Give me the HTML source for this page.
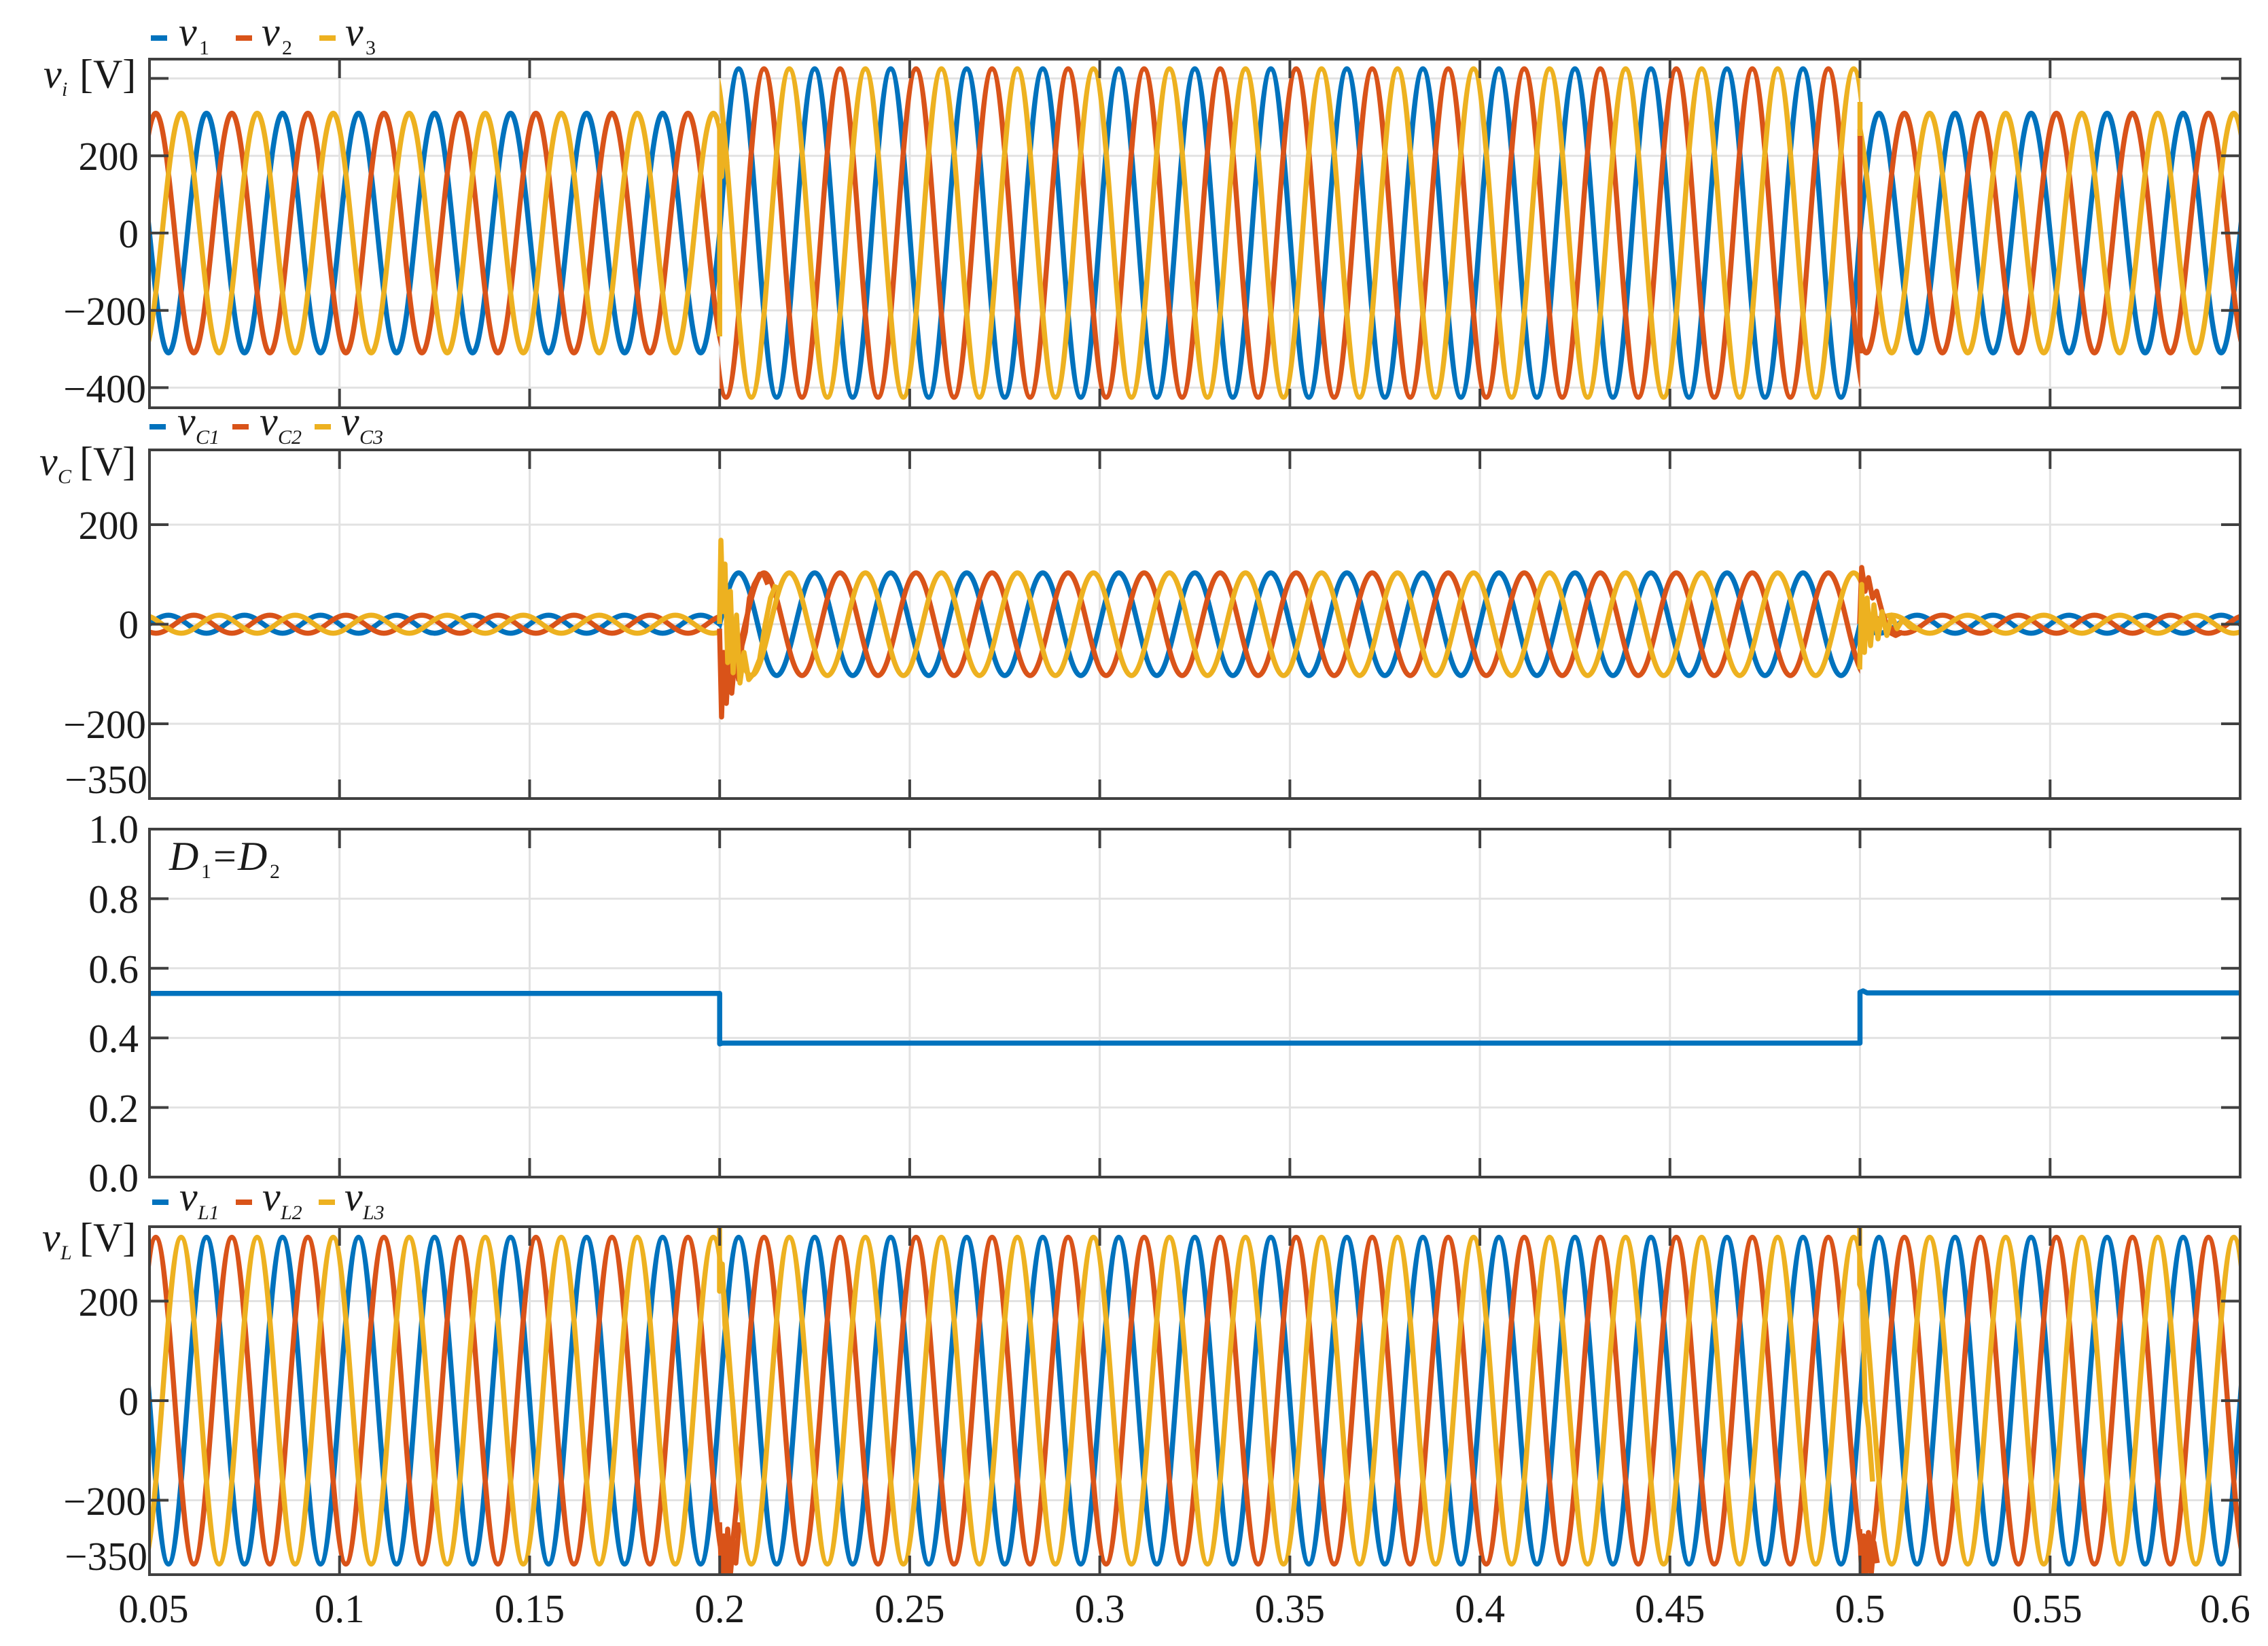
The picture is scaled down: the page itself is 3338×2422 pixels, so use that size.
<!DOCTYPE html>
<html><head><meta charset="utf-8"><style>
html,body{margin:0;padding:0;background:#fff;}
svg{display:block;}
text{font-family:"Liberation Serif",serif;fill:#1a1a1a;}
.t{font-size:59px;}
.it{font-style:italic;}
</style></head><body>
<svg width="3338" height="2422" viewBox="0 0 3338 2422" xmlns="http://www.w3.org/2000/svg" xmlns:xlink="http://www.w3.org/1999/xlink">
<defs>
<path id="w" vector-effect="non-scaling-stroke" d="M0,0c9.123,-51.23 17.849,-100 27.973,-100s18.85,48.77 27.973,100s17.849,100 27.973,100s18.85,-48.77 27.973,-100s17.849,-100 27.973,-100s18.85,48.77 27.973,100s17.849,100 27.973,100s18.85,-48.77 27.973,-100s17.849,-100 27.973,-100s18.85,48.77 27.973,100s17.849,100 27.973,100s18.85,-48.77 27.973,-100s17.849,-100 27.973,-100s18.85,48.77 27.973,100s17.849,100 27.973,100s18.85,-48.77 27.973,-100s17.849,-100 27.973,-100s18.85,48.77 27.973,100s17.849,100 27.973,100s18.85,-48.77 27.973,-100s17.849,-100 27.973,-100s18.85,48.77 27.973,100s17.849,100 27.973,100s18.85,-48.77 27.973,-100s17.849,-100 27.973,-100s18.85,48.77 27.973,100s17.849,100 27.973,100s18.85,-48.77 27.973,-100s17.849,-100 27.973,-100s18.85,48.77 27.973,100s17.849,100 27.973,100s18.85,-48.77 27.973,-100s17.849,-100 27.973,-100s18.85,48.77 27.973,100s17.849,100 27.973,100s18.85,-48.77 27.973,-100s17.849,-100 27.973,-100s18.85,48.77 27.973,100s17.849,100 27.973,100s18.85,-48.77 27.973,-100s17.849,-100 27.973,-100s18.85,48.77 27.973,100s17.849,100 27.973,100s18.85,-48.77 27.973,-100s17.849,-100 27.973,-100s18.85,48.77 27.973,100s17.849,100 27.973,100s18.85,-48.77 27.973,-100s17.849,-100 27.973,-100s18.85,48.77 27.973,100s17.849,100 27.973,100s18.85,-48.77 27.973,-100s17.849,-100 27.973,-100s18.85,48.77 27.973,100s17.849,100 27.973,100s18.85,-48.77 27.973,-100s17.849,-100 27.973,-100s18.85,48.77 27.973,100s17.849,100 27.973,100s18.85,-48.77 27.973,-100s17.849,-100 27.973,-100s18.85,48.77 27.973,100s17.849,100 27.973,100s18.85,-48.77 27.973,-100s17.849,-100 27.973,-100s18.85,48.77 27.973,100s17.849,100 27.973,100s18.85,-48.77 27.973,-100s17.849,-100 27.973,-100s18.85,48.77 27.973,100s17.849,100 27.973,100s18.85,-48.77 27.973,-100s17.849,-100 27.973,-100s18.85,48.77 27.973,100s17.849,100 27.973,100s18.85,-48.77 27.973,-100s17.849,-100 27.973,-100s18.85,48.77 27.973,100s17.849,100 27.973,100s18.85,-48.77 27.973,-100s17.849,-100 27.973,-100s18.85,48.77 27.973,100s17.849,100 27.973,100s18.85,-48.77 27.973,-100s17.849,-100 27.973,-100s18.85,48.77 27.973,100s17.849,100 27.973,100s18.85,-48.77 27.973,-100s17.849,-100 27.973,-100s18.85,48.77 27.973,100s17.849,100 27.973,100s18.85,-48.77 27.973,-100s17.849,-100 27.973,-100s18.85,48.77 27.973,100s17.849,100 27.973,100s18.85,-48.77 27.973,-100s17.849,-100 27.973,-100s18.85,48.77 27.973,100s17.849,100 27.973,100s18.85,-48.77 27.973,-100s17.849,-100 27.973,-100s18.85,48.77 27.973,100s17.849,100 27.973,100s18.85,-48.77 27.973,-100s17.849,-100 27.973,-100s18.85,48.77 27.973,100s17.849,100 27.973,100s18.85,-48.77 27.973,-100s17.849,-100 27.973,-100s18.85,48.77 27.973,100s17.849,100 27.973,100s18.85,-48.77 27.973,-100s17.849,-100 27.973,-100s18.85,48.77 27.973,100s17.849,100 27.973,100s18.85,-48.77 27.973,-100s17.849,-100 27.973,-100s18.85,48.77 27.973,100s17.849,100 27.973,100s18.85,-48.77 27.973,-100s17.849,-100 27.973,-100s18.85,48.77 27.973,100s17.849,100 27.973,100s18.85,-48.77 27.973,-100s17.849,-100 27.973,-100s18.85,48.77 27.973,100s17.849,100 27.973,100s18.85,-48.77 27.973,-100s17.849,-100 27.973,-100s18.85,48.77 27.973,100s17.849,100 27.973,100s18.85,-48.77 27.973,-100s17.849,-100 27.973,-100s18.85,48.77 27.973,100s17.849,100 27.973,100s18.85,-48.77 27.973,-100"/>
<clipPath id="a1"><rect x="220" y="87" width="839.2" height="513"/><rect x="2737.5" y="87" width="559.5" height="513"/></clipPath>
<clipPath id="b1"><rect x="1059.2" y="87" width="1678.3" height="513"/></clipPath>
<clipPath id="a2"><rect x="220" y="662" width="839.2" height="513"/><rect x="2737.5" y="662" width="559.5" height="513"/></clipPath>
<clipPath id="b2"><rect x="1059.2" y="662" width="1678.3" height="513"/></clipPath>
<clipPath id="c2"><rect x="220" y="662" width="3077" height="513"/></clipPath>
<clipPath id="c4"><rect x="220" y="1805" width="3077" height="512"/></clipPath>
</defs>

<path stroke="#e2e2e2" stroke-width="3" fill="none" d="
M499.7 87V600M779.5 87V600M1059.2 87V600M1338.9 87V600M1618.6 87V600M1898.4 87V600M2178.1 87V600M2457.8 87V600M2737.5 87V600M3017.3 87V600
M499.7 662V1175M779.5 662V1175M1059.2 662V1175M1338.9 662V1175M1618.6 662V1175M1898.4 662V1175M2178.1 662V1175M2457.8 662V1175M2737.5 662V1175M3017.3 662V1175
M499.7 1220V1732M779.5 1220V1732M1059.2 1220V1732M1338.9 1220V1732M1618.6 1220V1732M1898.4 1220V1732M2178.1 1220V1732M2457.8 1220V1732M2737.5 1220V1732M3017.3 1220V1732
M499.7 1805V2317M779.5 1805V2317M1059.2 1805V2317M1338.9 1805V2317M1618.6 1805V2317M1898.4 1805V2317M2178.1 1805V2317M2457.8 1805V2317M2737.5 1805V2317M3017.3 1805V2317
M220 115.4H3297M220 229.2H3297M220 342.9H3297M220 456.7H3297M220 570.4H3297
M220 772H3297M220 918.5H3297M220 1065H3297
M220 1322.4H3297M220 1424.8H3297M220 1527.2H3297M220 1629.6H3297
M220 1914.5H3297M220 2061H3297M220 2207.5H3297"/>

<g fill="none" stroke-width="7.5" stroke-linejoin="round">
<g clip-path="url(#a1)">
<use xlink:href="#w" href="#w" stroke="#0072BD" transform="translate(52.16,342.9) scale(1,1.763)"/>
<use xlink:href="#w" href="#w" stroke="#D95319" transform="translate(89.46,342.9) scale(1,1.763)"/>
<use xlink:href="#w" href="#w" stroke="#EDB120" transform="translate(14.86,342.9) scale(1,1.763)"/>
</g>
<g clip-path="url(#b1)">
<use xlink:href="#w" href="#w" stroke="#0072BD" transform="translate(52.16,342.9) scale(1,2.417)"/>
<use xlink:href="#w" href="#w" stroke="#D95319" transform="translate(89.46,342.9) scale(1,2.417)"/>
<use xlink:href="#w" href="#w" stroke="#EDB120" transform="translate(14.86,342.9) scale(1,2.417)"/>
</g>
<path stroke="#D95319" d="M1059.2 190V433M2737.5 190V520"/>
<path stroke="#EDB120" d="M1059.2 495V185L1062 260L1066 200L1070 240M2737.5 150V200"/>

<g clip-path="url(#a2)">
<use xlink:href="#w" href="#w" stroke="#0072BD" transform="translate(52.16,918.5) scale(1,-0.132)"/>
<use xlink:href="#w" href="#w" stroke="#D95319" transform="translate(89.46,918.5) scale(1,-0.132)"/>
<use xlink:href="#w" href="#w" stroke="#EDB120" transform="translate(14.86,918.5) scale(1,-0.132)"/>
</g>
<g clip-path="url(#b2)">
<use xlink:href="#w" href="#w" stroke="#0072BD" transform="translate(52.16,918.5) scale(1,0.755)"/>
<use xlink:href="#w" href="#w" stroke="#D95319" transform="translate(89.46,918.5) scale(1,0.755)"/>
<use xlink:href="#w" href="#w" stroke="#EDB120" transform="translate(14.86,918.5) scale(1,0.755)"/>
</g>
<g clip-path="url(#c2)">
<path stroke="#D95319" d="M1059 925L1062 1055L1065 960L1069 1035L1073 960L1077 1020L1082 965L1087 1000L1092 950L1097 930L1103 880L1110 860L1118 845L1124 845L1130 860M2737 918L2740 835L2745 870L2750 850L2756 880L2762 870L2770 900L2780 930L2790 935L2800 930"/>
<path stroke="#EDB120" d="M1059 918L1061 795L1064 900L1067 830L1071 975L1075 870L1079 990L1084 905L1089 1005L1095 960L1102 1000L1110 990L1118 970L1126 920L1134 880L1142 860M2737 985L2740 860L2744 960L2748 880L2753 950L2758 890L2764 940L2770 900L2777 935L2784 905L2792 925L2800 912L2810 922L2820 925"/>
</g>

<path stroke="#0072BD" d="M220 1461.7H1059.2V1536L1063 1534.9H2737.5V1460L2742 1458L2748 1461H3297"/>

<g clip-path="url(#c4)">
<use xlink:href="#w" href="#w" stroke="#0072BD" transform="translate(52.16,2061) scale(1,2.404)"/>
<use xlink:href="#w" href="#w" stroke="#D95319" transform="translate(89.46,2061) scale(1,2.404)"/>
<path stroke="#D95319" d="M1059 2240L1062 2317L1065 2260L1068 2317L1071 2250L1075 2317L1079 2270L1083 2300L1088 2240M2737 2250L2740 2317L2743 2260L2746 2317L2750 2255L2754 2317L2758 2270L2763 2300"/>
<use xlink:href="#w" href="#w" stroke="#EDB120" transform="translate(14.86,2061) scale(1,2.404)"/>
<path stroke="#EDB120" d="M1059 1805V1900L1063 1860L1067 1950L1072 2000L1078 2060L1085 2150M2737 1805V1890L2741 1900L2745 2060L2750 2100L2756 2180"/>
</g>
</g>

<g stroke="#404040" fill="none" stroke-width="4">
<rect x="220" y="87" width="3077" height="513"/>
<rect x="220" y="662" width="3077" height="513"/>
<rect x="220" y="1220" width="3077" height="512"/>
<rect x="220" y="1805" width="3077" height="512"/>
<path d="
M499.7 87v28M779.5 87v28M1059.2 87v28M1338.9 87v28M1618.6 87v28M1898.4 87v28M2178.1 87v28M2457.8 87v28M2737.5 87v28M3017.3 87v28
M499.7 600v-28M779.5 600v-28M1059.2 600v-28M1338.9 600v-28M1618.6 600v-28M1898.4 600v-28M2178.1 600v-28M2457.8 600v-28M2737.5 600v-28M3017.3 600v-28
M499.7 662v28M779.5 662v28M1059.2 662v28M1338.9 662v28M1618.6 662v28M1898.4 662v28M2178.1 662v28M2457.8 662v28M2737.5 662v28M3017.3 662v28
M499.7 1175v-28M779.5 1175v-28M1059.2 1175v-28M1338.9 1175v-28M1618.6 1175v-28M1898.4 1175v-28M2178.1 1175v-28M2457.8 1175v-28M2737.5 1175v-28M3017.3 1175v-28
M499.7 1220v28M779.5 1220v28M1059.2 1220v28M1338.9 1220v28M1618.6 1220v28M1898.4 1220v28M2178.1 1220v28M2457.8 1220v28M2737.5 1220v28M3017.3 1220v28
M499.7 1732v-28M779.5 1732v-28M1059.2 1732v-28M1338.9 1732v-28M1618.6 1732v-28M1898.4 1732v-28M2178.1 1732v-28M2457.8 1732v-28M2737.5 1732v-28M3017.3 1732v-28
M499.7 1805v28M779.5 1805v28M1059.2 1805v28M1338.9 1805v28M1618.6 1805v28M1898.4 1805v28M2178.1 1805v28M2457.8 1805v28M2737.5 1805v28M3017.3 1805v28
M499.7 2317v-28M779.5 2317v-28M1059.2 2317v-28M1338.9 2317v-28M1618.6 2317v-28M1898.4 2317v-28M2178.1 2317v-28M2457.8 2317v-28M2737.5 2317v-28M3017.3 2317v-28
M220 115.4h28M220 229.2h28M220 342.9h28M220 456.7h28M220 570.4h28
M3297 115.4h-28M3297 229.2h-28M3297 342.9h-28M3297 456.7h-28M3297 570.4h-28
M220 772h28M220 918.5h28M220 1065h28M3297 772h-28M3297 918.5h-28M3297 1065h-28
M220 1322.4h28M220 1424.8h28M220 1527.2h28M220 1629.6h28M3297 1322.4h-28M3297 1424.8h-28M3297 1527.2h-28M3297 1629.6h-28
M220 1914.5h28M220 2061h28M220 2207.5h28M3297 1914.5h-28M3297 2061h-28M3297 2207.5h-28"/>
</g>

<rect x="222" y="52" width="24" height="8" fill="#0072BD"/><text x="263" y="67" font-size="60" class="it">v</text><text x="293" y="80" font-size="30">1</text>
<rect x="347" y="52" width="24" height="8" fill="#D95319"/><text x="385" y="67" font-size="60" class="it">v</text><text x="415" y="80" font-size="30">2</text>
<rect x="470" y="52" width="24" height="8" fill="#EDB120"/><text x="508" y="67" font-size="60" class="it">v</text><text x="538" y="80" font-size="30">3</text>

<rect x="220" y="624" width="24" height="8" fill="#0072BD"/><text x="261" y="640" font-size="60" class="it">v</text><text x="288" y="653" font-size="30" class="it">C1</text>
<rect x="342" y="624" width="24" height="8" fill="#D95319"/><text x="382" y="640" font-size="60" class="it">v</text><text x="409" y="653" font-size="30" class="it">C2</text>
<rect x="463" y="624" width="24" height="8" fill="#EDB120"/><text x="502" y="640" font-size="60" class="it">v</text><text x="529" y="653" font-size="30" class="it">C3</text>

<rect x="224" y="1765" width="24" height="8" fill="#0072BD"/><text x="264" y="1781" font-size="60" class="it">v</text><text x="291" y="1794" font-size="30" class="it">L1</text>
<rect x="347" y="1765" width="24" height="8" fill="#D95319"/><text x="386" y="1781" font-size="60" class="it">v</text><text x="413" y="1794" font-size="30" class="it">L2</text>
<rect x="469" y="1765" width="24" height="8" fill="#EDB120"/><text x="507" y="1781" font-size="60" class="it">v</text><text x="534" y="1794" font-size="30" class="it">L3</text>

<text x="64" y="129" font-size="60" class="it">v</text><text x="91" y="141" font-size="30" class="it">i</text><text x="117" y="129" font-size="60">[V]</text>
<text x="58" y="699" font-size="60" class="it">v</text><text x="85" y="711" font-size="30" class="it">C</text><text x="117" y="699" font-size="60">[V]</text>
<text x="62" y="1841" font-size="60" class="it">v</text><text x="89" y="1853" font-size="30" class="it">L</text><text x="117" y="1841" font-size="60">[V]</text>

<text x="249" y="1280" font-size="60" class="it">D</text><text x="296" y="1292" font-size="30">1</text><text x="314" y="1280" font-size="60">=</text><text x="350" y="1280" font-size="60" class="it">D</text><text x="397" y="1292" font-size="30">2</text>

<g class="t" text-anchor="end">
<text x="204" y="250">200</text>
<text x="204" y="364">0</text>
<text x="215" y="478">−200</text>
<text x="215" y="592">−400</text>
<text x="204" y="793">200</text>
<text x="204" y="939">0</text>
<text x="215" y="1086">−200</text>
<text x="217" y="1167">−350</text>
<text x="204" y="1240">1.0</text>
<text x="204" y="1343">0.8</text>
<text x="204" y="1446">0.6</text>
<text x="204" y="1548">0.4</text>
<text x="204" y="1651">0.2</text>
<text x="204" y="1753">0.0</text>
<text x="204" y="1936">200</text>
<text x="204" y="2082">0</text>
<text x="215" y="2229">−200</text>
<text x="217" y="2310">−350</text>
</g>
<g class="t" text-anchor="middle">
<text x="226" y="2387">0.05</text>
<text x="499.7" y="2387">0.1</text>
<text x="779.5" y="2387">0.15</text>
<text x="1059.2" y="2387">0.2</text>
<text x="1338.9" y="2387">0.25</text>
<text x="1618.6" y="2387">0.3</text>
<text x="1898.4" y="2387">0.35</text>
<text x="2178.1" y="2387">0.4</text>
<text x="2457.8" y="2387">0.45</text>
<text x="2737.5" y="2387">0.5</text>
<text x="3013" y="2387">0.55</text>
<text x="3275" y="2387">0.6</text>
</g>
</svg>
</body></html>
